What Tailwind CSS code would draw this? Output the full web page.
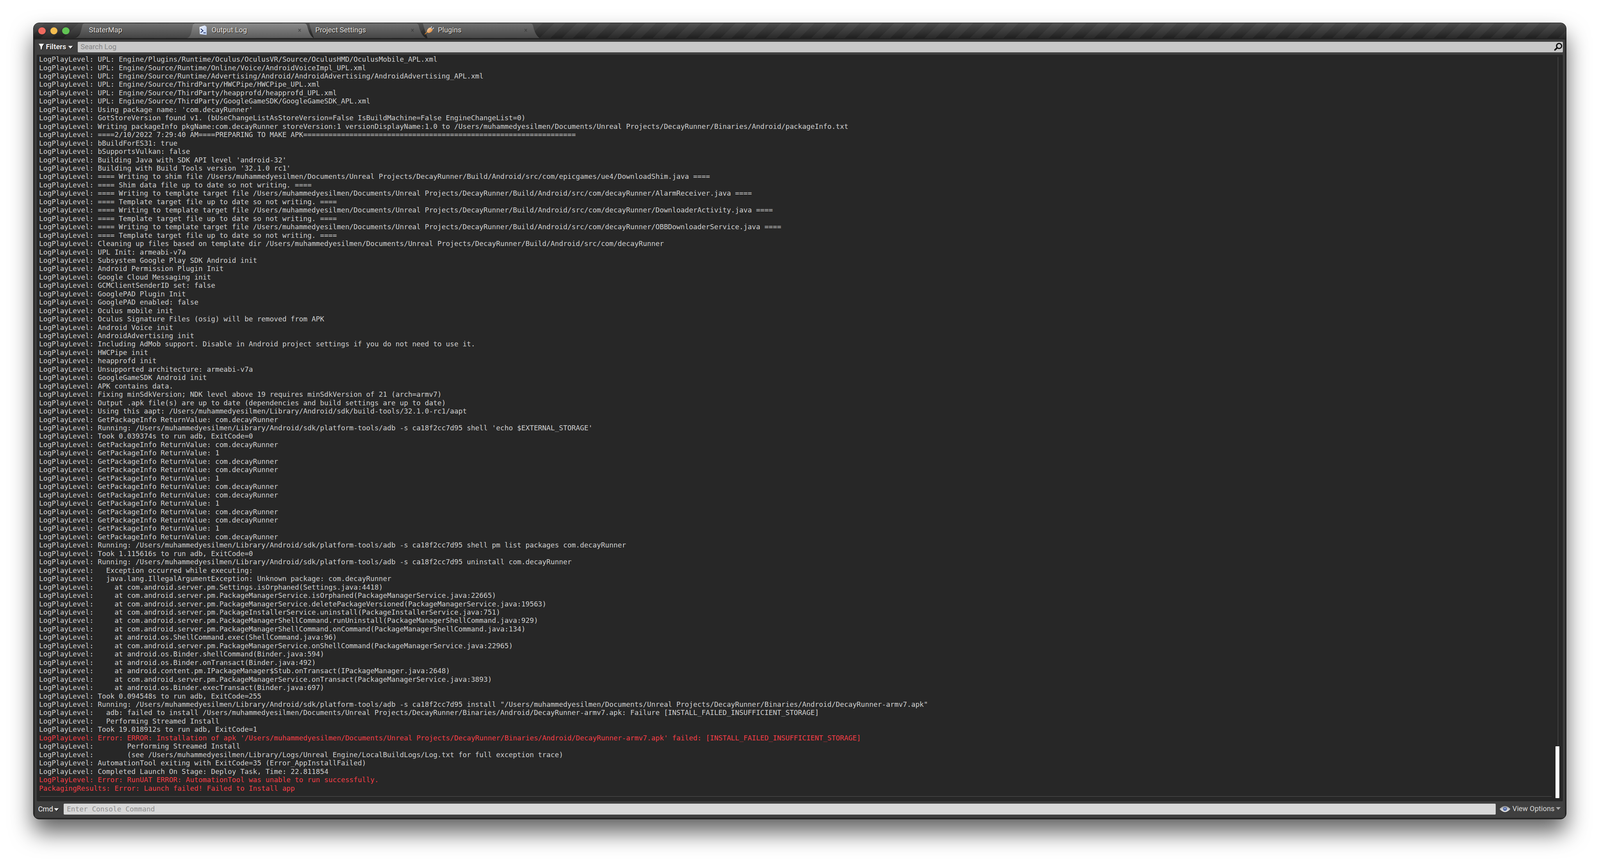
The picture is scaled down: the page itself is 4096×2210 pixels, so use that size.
<!DOCTYPE html>
<html>
<head>
<meta charset="utf-8">
<script src="https://cdn.jsdelivr.net/npm/@tailwindcss/browser@4"></script>
<title>Output Log</title>
</head>
<body class="bg-white">
<div class="w-[4096px] h-[2210px] pl-[85px] pt-[57.5px] overflow-hidden bg-white [font-family:Roboto,sans-serif]">
  <div class="w-[3925px] h-[2040.5px] rounded-[15px] overflow-hidden bg-[#2b2b2b] border border-[#0c0c0c] flex flex-col shadow-[0_33px_57px_rgba(0,0,0,0.62)]">

    <!-- title bar -->
    <div class="h-[39px] shrink-0 flex items-end pl-[105px] relative [background-image:repeating-linear-gradient(135deg,rgba(255,255,255,0.045)_0_20px,rgba(255,255,255,0)_20px_41px),linear-gradient(#4b4b4b,#1f1f1f)]">
      <div class="absolute left-[12.3px] top-[11.5px] flex gap-[12.2px]">
        <span class="w-[18.4px] h-[18.4px] rounded-full bg-[#ee6a5f]"></span>
        <span class="w-[18.4px] h-[18.4px] rounded-full bg-[#f5bd4f]"></span>
        <span class="w-[18.4px] h-[18.4px] rounded-full bg-[#61c454]"></span>
      </div>

      <!-- StaterMap -->
      <div class="relative w-[315px] h-[37.5px] shrink-0 flex items-center pl-[36.8px] pb-[3px] text-[18.4px] text-[#e4e4e4] [text-shadow:1px_1px_1px_#000]">
        <svg class="absolute inset-0 w-full h-full" viewBox="0 0 411 49" preserveAspectRatio="none"><defs><linearGradient id="t1" x1="0" y1="0" x2="0" y2="1"><stop offset="0" stop-color="#707070"/><stop offset="1" stop-color="#444444"/></linearGradient></defs><path d="M0 49Q14 46 20 30L26 6Q28 0 34 0L393 0Q400 0 403 10L411 49Z" fill="url(#t1)"/></svg>
        <span class="relative">StaterMap</span>
      </div>
      <!-- Output Log -->
      <div class="relative z-10 w-[323.5px] h-[37.5px] shrink-0 -ml-[26.8px] flex items-center pl-[30.7px] pb-[3px] text-[18.4px] text-[#e8e8e8] [text-shadow:1px_1px_1px_#000]">
        <svg class="absolute inset-0 w-full h-full" viewBox="0 0 422 49" preserveAspectRatio="none"><defs><linearGradient id="t2" x1="0" y1="0" x2="0" y2="1"><stop offset="0" stop-color="#8b8b8b"/><stop offset="1" stop-color="#5c5c5c"/></linearGradient></defs><path d="M0 49Q10 46 14 30L19 6Q21 0 27 0L392 0Q398 0 401 8Q408 40 422 49Z" fill="url(#t2)"/></svg>
        <svg class="relative w-[19px] h-[24.5px] shrink-0" viewBox="0 0 25 32"><defs><linearGradient id="doc" x1="0" y1="0" x2="1" y2="1"><stop offset="0" stop-color="#f2f6ff"/><stop offset="1" stop-color="#b5c8ee"/></linearGradient></defs><path d="M1 5L19 0L25 5L25 32L2 29Z" fill="url(#doc)"/><path d="M5 11L13 18L5 24" fill="none" stroke="#16265a" stroke-width="2.4"/><path d="M14 25H22" stroke="#16265a" stroke-width="2.4"/></svg>
        <span class="relative ml-[12.9px]">Output Log</span>
        <svg class="relative ml-auto mr-[32px] w-[8px] h-[9px]" viewBox="0 0 8 9"><path d="M1 1L7 8M7 1L1 8" stroke="#474747" stroke-width="1.8"/></svg>
      </div>
      <!-- Project Settings -->
      <div class="relative z-[5] w-[300.5px] h-[37.5px] shrink-0 -ml-[12.3px] flex items-center pl-[16.9px] pb-[3px] text-[18.4px] text-[#e4e4e4] [text-shadow:1px_1px_1px_#000]">
        <svg class="absolute inset-0 w-full h-full" viewBox="0 0 392 49" preserveAspectRatio="none"><defs><linearGradient id="t3" x1="0" y1="0" x2="0" y2="1"><stop offset="0" stop-color="#707070"/><stop offset="1" stop-color="#464646"/></linearGradient></defs><path d="M2 0L360 0Q366 0 368 8Q375 40 392 49L18 49Q10 30 2 0Z" fill="url(#t3)"/></svg>
        <span class="relative">Project Settings</span>
        <svg class="relative ml-auto mr-[30.5px] w-[8px] h-[9px]" viewBox="0 0 8 9"><path d="M1 1L7 8M7 1L1 8" stroke="#404040" stroke-width="1.8"/></svg>
      </div>
      <!-- Plugins -->
      <div class="relative z-[4] w-[300.5px] h-[37.5px] shrink-0 -ml-[10px] flex items-center pl-[6px] pb-[3px] text-[18.4px] text-[#e4e4e4] [text-shadow:1px_1px_1px_#000]">
        <svg class="absolute inset-0 w-full h-full" viewBox="0 0 392 49" preserveAspectRatio="none"><defs><linearGradient id="t4" x1="0" y1="0" x2="0" y2="1"><stop offset="0" stop-color="#707070"/><stop offset="1" stop-color="#464646"/></linearGradient></defs><path d="M2 0L362 0Q368 0 370 8Q377 40 392 49L18 49Q10 30 2 0Z" fill="url(#t4)"/></svg>
        <svg class="relative w-[24.5px] h-[21.5px] shrink-0" viewBox="0 0 32 28"><defs><linearGradient id="plug" x1="0" y1="0" x2="1" y2="1"><stop offset="0" stop-color="#fbe3c4"/><stop offset="1" stop-color="#dd7a20"/></linearGradient></defs><path d="M20 7L24 1M26 10L31 5" stroke="#cfdcf5" stroke-width="2.4"/><path d="M0 28L9 19" stroke="#d8852e" stroke-width="2.4"/><path d="M16 5Q24 6 27 12Q25 19 17 22Q11 24 8 19Q7 11 16 5Z" fill="url(#plug)"/></svg>
        <span class="relative ml-[9.5px]">Plugins</span>
        <svg class="relative ml-auto mr-[31.5px] w-[8px] h-[9px]" viewBox="0 0 8 9"><path d="M1 1L7 8M7 1L1 8" stroke="#404040" stroke-width="1.8"/></svg>
      </div>
    </div>

    <!-- body -->
    <div class="h-[3px] shrink-0 bg-[#232323]"></div>
    <div class="mx-[3px] w-[3917px] h-[1993.5px] bg-[#3f3f3f] rounded-[3px] px-[4.6px] pt-[6.1px] flex flex-col">

      <!-- filter row -->
      <div class="h-[27.6px] shrink-0 flex items-center">
        <div class="w-[105px] h-full shrink-0 flex items-center pl-[5.4px] pb-[2px] text-[18.4px] font-bold text-[#f2f2f2] [text-shadow:1px_1px_1px_#000]">
          <svg class="w-[13.8px] h-[15.5px] shrink-0 drop-shadow-[1px_1px_0_#000]" viewBox="0 0 18 20"><path d="M0 0H18L12 9L10 20L7 18L6 9Z" fill="#f4f4f4"/></svg>
          <span class="ml-[4.6px]">Filters</span>
          <svg class="ml-[4.6px] mt-[4px] w-[13px] h-[8px] drop-shadow-[1px_1px_0_#000]" viewBox="0 0 13 8"><path d="M0.5 0.5H12.5L6.5 7.5Z" fill="#f4f4f4"/></svg>
        </div>
        <div class="flex-1 h-full bg-[#c8c8c8] rounded-[2px] flex items-center pl-[7.7px] pr-[1.5px] text-[18.4px] text-[#858585]">
          <span class="-mt-[1px]">Search Log</span>
          <svg class="ml-auto w-[22px] h-[22px] shrink-0" viewBox="0 0 28 29"><circle cx="17" cy="11.500" r="8.500" fill="none" stroke="#0d0d0d" stroke-width="4"/><path d="M10 18L3 25" stroke="#0d0d0d" stroke-width="5" stroke-linecap="round"/></svg>
        </div>
      </div>

      <!-- log -->
      <div class="relative mt-[6.1px] h-[1912px] shrink-0 bg-[#272727] rounded-[3px] pl-[6.5px] pt-[0.8px] overflow-hidden">
<pre class="[font-family:'DejaVu_Sans_Mono',monospace] text-[17.83px] leading-[21.46px] text-[#cfcfcf] whitespace-pre">LogPlayLevel: UPL: Engine/Plugins/Runtime/Oculus/OculusVR/Source/OculusHMD/OculusMobile_APL.xml
LogPlayLevel: UPL: Engine/Source/Runtime/Online/Voice/AndroidVoiceImpl_UPL.xml
LogPlayLevel: UPL: Engine/Source/Runtime/Advertising/Android/AndroidAdvertising/AndroidAdvertising_APL.xml
LogPlayLevel: UPL: Engine/Source/ThirdParty/HWCPipe/HWCPipe_UPL.xml
LogPlayLevel: UPL: Engine/Source/ThirdParty/heapprofd/heapprofd_UPL.xml
LogPlayLevel: UPL: Engine/Source/ThirdParty/GoogleGameSDK/GoogleGameSDK_APL.xml
LogPlayLevel: Using package name: 'com.decayRunner'
LogPlayLevel: GotStoreVersion found v1. (bUseChangeListAsStoreVersion=False IsBuildMachine=False EngineChangeList=0)
LogPlayLevel: Writing packageInfo pkgName:com.decayRunner storeVersion:1 versionDisplayName:1.0 to /Users/muhammedyesilmen/Documents/Unreal Projects/DecayRunner/Binaries/Android/packageInfo.txt
LogPlayLevel: ====2/10/2022 7:29:40 AM====PREPARING TO MAKE APK=================================================================
LogPlayLevel: bBuildForES31: true
LogPlayLevel: bSupportsVulkan: false
LogPlayLevel: Building Java with SDK API level 'android-32'
LogPlayLevel: Building with Build Tools version '32.1.0 rc1'
LogPlayLevel: ==== Writing to shim file /Users/muhammedyesilmen/Documents/Unreal Projects/DecayRunner/Build/Android/src/com/epicgames/ue4/DownloadShim.java ====
LogPlayLevel: ==== Shim data file up to date so not writing. ====
LogPlayLevel: ==== Writing to template target file /Users/muhammedyesilmen/Documents/Unreal Projects/DecayRunner/Build/Android/src/com/decayRunner/AlarmReceiver.java ====
LogPlayLevel: ==== Template target file up to date so not writing. ====
LogPlayLevel: ==== Writing to template target file /Users/muhammedyesilmen/Documents/Unreal Projects/DecayRunner/Build/Android/src/com/decayRunner/DownloaderActivity.java ====
LogPlayLevel: ==== Template target file up to date so not writing. ====
LogPlayLevel: ==== Writing to template target file /Users/muhammedyesilmen/Documents/Unreal Projects/DecayRunner/Build/Android/src/com/decayRunner/OBBDownloaderService.java ====
LogPlayLevel: ==== Template target file up to date so not writing. ====
LogPlayLevel: Cleaning up files based on template dir /Users/muhammedyesilmen/Documents/Unreal Projects/DecayRunner/Build/Android/src/com/decayRunner
LogPlayLevel: UPL Init: armeabi-v7a
LogPlayLevel: Subsystem Google Play SDK Android init
LogPlayLevel: Android Permission Plugin Init
LogPlayLevel: Google Cloud Messaging init
LogPlayLevel: GCMClientSenderID set: false
LogPlayLevel: GooglePAD Plugin Init
LogPlayLevel: GooglePAD enabled: false
LogPlayLevel: Oculus mobile init
LogPlayLevel: Oculus Signature Files (osig) will be removed from APK
LogPlayLevel: Android Voice init
LogPlayLevel: AndroidAdvertising init
LogPlayLevel: Including AdMob support. Disable in Android project settings if you do not need to use it.
LogPlayLevel: HWCPipe init
LogPlayLevel: heapprofd init
LogPlayLevel: Unsupported architecture: armeabi-v7a
LogPlayLevel: GoogleGameSDK Android init
LogPlayLevel: APK contains data.
LogPlayLevel: Fixing minSdkVersion; NDK level above 19 requires minSdkVersion of 21 (arch=armv7)
LogPlayLevel: Output .apk file(s) are up to date (dependencies and build settings are up to date)
LogPlayLevel: Using this aapt: /Users/muhammedyesilmen/Library/Android/sdk/build-tools/32.1.0-rc1/aapt
LogPlayLevel: GetPackageInfo ReturnValue: com.decayRunner
LogPlayLevel: Running: /Users/muhammedyesilmen/Library/Android/sdk/platform-tools/adb -s ca18f2cc7d95 shell 'echo $EXTERNAL_STORAGE'
LogPlayLevel: Took 0.039374s to run adb, ExitCode=0
LogPlayLevel: GetPackageInfo ReturnValue: com.decayRunner
LogPlayLevel: GetPackageInfo ReturnValue: 1
LogPlayLevel: GetPackageInfo ReturnValue: com.decayRunner
LogPlayLevel: GetPackageInfo ReturnValue: com.decayRunner
LogPlayLevel: GetPackageInfo ReturnValue: 1
LogPlayLevel: GetPackageInfo ReturnValue: com.decayRunner
LogPlayLevel: GetPackageInfo ReturnValue: com.decayRunner
LogPlayLevel: GetPackageInfo ReturnValue: 1
LogPlayLevel: GetPackageInfo ReturnValue: com.decayRunner
LogPlayLevel: GetPackageInfo ReturnValue: com.decayRunner
LogPlayLevel: GetPackageInfo ReturnValue: 1
LogPlayLevel: GetPackageInfo ReturnValue: com.decayRunner
LogPlayLevel: Running: /Users/muhammedyesilmen/Library/Android/sdk/platform-tools/adb -s ca18f2cc7d95 shell pm list packages com.decayRunner
LogPlayLevel: Took 1.115616s to run adb, ExitCode=0
LogPlayLevel: Running: /Users/muhammedyesilmen/Library/Android/sdk/platform-tools/adb -s ca18f2cc7d95 uninstall com.decayRunner
LogPlayLevel:   Exception occurred while executing:
LogPlayLevel:   java.lang.IllegalArgumentException: Unknown package: com.decayRunner
LogPlayLevel:     at com.android.server.pm.Settings.isOrphaned(Settings.java:4418)
LogPlayLevel:     at com.android.server.pm.PackageManagerService.isOrphaned(PackageManagerService.java:22665)
LogPlayLevel:     at com.android.server.pm.PackageManagerService.deletePackageVersioned(PackageManagerService.java:19563)
LogPlayLevel:     at com.android.server.pm.PackageInstallerService.uninstall(PackageInstallerService.java:751)
LogPlayLevel:     at com.android.server.pm.PackageManagerShellCommand.runUninstall(PackageManagerShellCommand.java:929)
LogPlayLevel:     at com.android.server.pm.PackageManagerShellCommand.onCommand(PackageManagerShellCommand.java:134)
LogPlayLevel:     at android.os.ShellCommand.exec(ShellCommand.java:96)
LogPlayLevel:     at com.android.server.pm.PackageManagerService.onShellCommand(PackageManagerService.java:22965)
LogPlayLevel:     at android.os.Binder.shellCommand(Binder.java:594)
LogPlayLevel:     at android.os.Binder.onTransact(Binder.java:492)
LogPlayLevel:     at android.content.pm.IPackageManager$Stub.onTransact(IPackageManager.java:2648)
LogPlayLevel:     at com.android.server.pm.PackageManagerService.onTransact(PackageManagerService.java:3893)
LogPlayLevel:     at android.os.Binder.execTransact(Binder.java:697)
LogPlayLevel: Took 0.094548s to run adb, ExitCode=255
LogPlayLevel: Running: /Users/muhammedyesilmen/Library/Android/sdk/platform-tools/adb -s ca18f2cc7d95 install "/Users/muhammedyesilmen/Documents/Unreal Projects/DecayRunner/Binaries/Android/DecayRunner-armv7.apk"
LogPlayLevel:   adb: failed to install /Users/muhammedyesilmen/Documents/Unreal Projects/DecayRunner/Binaries/Android/DecayRunner-armv7.apk: Failure [INSTALL_FAILED_INSUFFICIENT_STORAGE]
LogPlayLevel:   Performing Streamed Install
LogPlayLevel: Took 19.018912s to run adb, ExitCode=1
<span class="text-[#f53d46]">LogPlayLevel: Error: ERROR: Installation of apk '/Users/muhammedyesilmen/Documents/Unreal Projects/DecayRunner/Binaries/Android/DecayRunner-armv7.apk' failed: [INSTALL_FAILED_INSUFFICIENT_STORAGE]</span>
LogPlayLevel:        Performing Streamed Install
LogPlayLevel:        (see /Users/muhammedyesilmen/Library/Logs/Unreal Engine/LocalBuildLogs/Log.txt for full exception trace)
LogPlayLevel: AutomationTool exiting with ExitCode=35 (Error_AppInstallFailed)
LogPlayLevel: Completed Launch On Stage: Deploy Task, Time: 22.811854
<span class="text-[#f53d46]">LogPlayLevel: Error: RunUAT ERROR: AutomationTool was unable to run successfully.</span>
<span class="text-[#f53d46]">PackagingResults: Error: Launch failed! Failed to Install app</span></pre>
        <!-- scrollbars -->
        <div class="absolute left-[3894px] top-[6.1px] h-[1763px] w-px bg-[#5a5a5a]"></div>
        <div class="absolute left-[3887px] top-[1769.5px] w-[12.3px] h-[135.7px] bg-white border border-[#111] rounded-[2px]"></div>
        <div class="absolute left-[8.4px] top-[1898.9px] w-[3870px] h-px bg-[#555555]"></div>
      </div>

      <!-- command row -->
      <div class="h-[27.6px] mt-[6.1px] shrink-0 flex items-center">
        <div class="w-[69px] h-full shrink-0 flex items-center pl-[3.8px] text-[18.4px] text-[#f0f0f0]">
          <span>Cmd</span>
          <svg class="ml-[2.5px] mt-[2px] w-[13px] h-[8.5px] drop-shadow-[1px_1px_0_#000]" viewBox="0 0 13 8"><path d="M0.5 0.5H12.5L6.5 7.5Z" fill="#f4f4f4"/></svg>
        </div>
        <div class="w-[3666.5px] h-full shrink-0 bg-[#d8d8d8] rounded-[2px] flex items-center pl-[8.4px] [font-family:'DejaVu_Sans_Mono',monospace] text-[17.83px] text-[#8f8f8f]">Enter Console Command</div>
        <div class="flex items-center pl-[10.4px] text-[18.4px] text-[#d6d6d6]">
          <svg class="w-[27.6px] h-[15.5px] shrink-0" viewBox="0 0 36 20"><defs><linearGradient id="eye" x1="0" y1="0" x2="0" y2="1"><stop offset="0" stop-color="#8c8c8c"/><stop offset="0.5" stop-color="#c9c9c9"/><stop offset="1" stop-color="#ededed"/></linearGradient></defs><path d="M0 10Q9 0 18 0Q27 0 36 10Q27 20 18 20Q9 20 0 10Z" fill="url(#eye)"/><circle cx="18" cy="10" r="6.500" fill="#5068a6"/><circle cx="18" cy="8" r="2" fill="#c6d0ea"/></svg>
          <span class="ml-[4.6px] -mt-[2px]">View Options</span>
          <svg class="ml-[3.5px] -mt-[3px] w-[12.3px] h-[7px]" viewBox="0 0 12 7"><path d="M0 0H12L6 7Z" fill="#a8a8a8"/></svg>
        </div>
      </div>
    </div>
  </div>
</div>
</body>
</html>
